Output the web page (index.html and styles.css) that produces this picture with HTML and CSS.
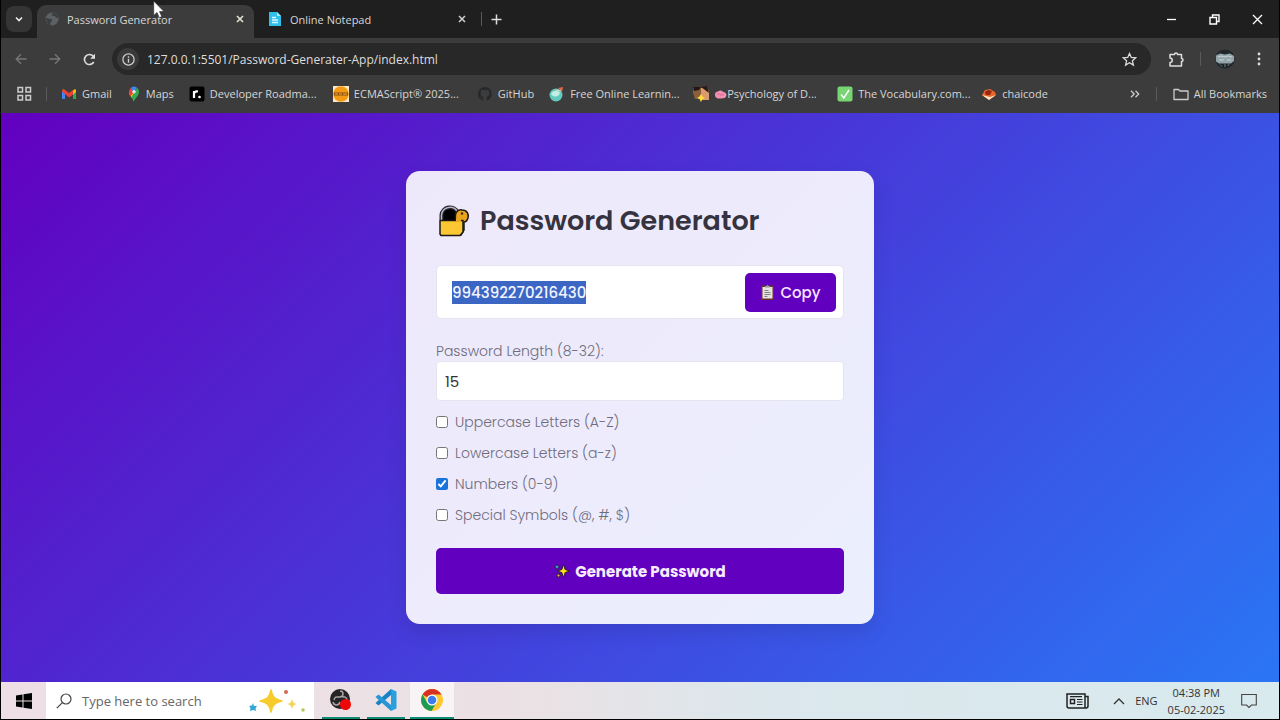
FILE: index.html
```
<!DOCTYPE html>
<html lang="en">
<head>
    <meta charset="UTF-8">
    <meta name="viewport" content="width=device-width, initial-scale=1.0">
    <title>Password Generator</title>
    <link rel="stylesheet" href="styles.css">
</head>
<body>
    <div class="screen">

        <!-- tab strip -->
        <div class="tabs">
            <button class="tab-list" aria-label="Search tabs">
                <svg width="10" height="10" viewBox="0 0 10 10"><path d="M2 3.5l3 3 3-3" fill="none" stroke="#eee" stroke-width="1.6"/></svg>
            </button>
            <div class="tab active">
                <svg width="14" height="14" viewBox="0 0 14 14"><circle cx="7" cy="7" r="6.5" fill="#5c6164"/><path d="M1 6c2 0 3 1 5 1s1 2 0 3-1 2 0 3.500C3 13 1 10 1 6zM7 1c-1 2 0 3 2 3s1 2 3 2l1.300-.5C12.500 3 10 1 7 1z" fill="#3a3f42"/></svg>
                <span>Password Generator</span>
                <button class="close" aria-label="Close tab"><svg width="8" height="8" viewBox="0 0 8 8"><path d="M1 1l6 6M7 1L1 7" stroke="#e4e0d0" stroke-width="1.7"/></svg></button>
            </div>
            <div class="tab">
                <svg width="14" height="14" viewBox="0 0 14 14"><path d="M1 0h8l4 4v10H1z" fill="#2fc0ea"/><path d="M9 0v4h4z" fill="#a8e8fa"/><path d="M4 5.500h4M4 8h6M4 10.500h6" stroke="#d6f5ff" stroke-width="1.300"/></svg>
                <span>Online Notepad</span>
                <button class="close" aria-label="Close tab"><svg width="8" height="8" viewBox="0 0 8 8"><path d="M1 1l6 6M7 1L1 7" stroke="#d0d0d0" stroke-width="1.500"/></svg></button>
            </div>
            <span class="line"></span>
            <button class="new-tab" aria-label="New tab"><svg width="11" height="11" viewBox="0 0 11 11"><path d="M5.500 0.500v10M0.500 5.500h10" stroke="#ddd" stroke-width="1.500"/></svg></button>
            <div class="window-btns">
                <button aria-label="Minimize"><svg width="11" height="11" viewBox="0 0 11 11"><path d="M1 5.500h9" stroke="#fff" stroke-width="1.300"/></svg></button>
                <button aria-label="Restore"><svg width="11" height="11" viewBox="0 0 11 11"><path d="M1 3.500h6.500V10H1zM3.500 3.500V1H10v6.500H7.500" fill="none" stroke="#fff" stroke-width="1.400"/></svg></button>
                <button aria-label="Close"><svg width="11" height="11" viewBox="0 0 11 11"><path d="M1 1l9 9M10 1l-9 9" stroke="#fff" stroke-width="1.300"/></svg></button>
            </div>
        </div>

        <!-- address bar -->
        <div class="toolbar">
            <button aria-label="Back"><svg width="12" height="12" viewBox="0 0 12 12"><path d="M11.500 6H1.500M6 1.200L1.200 6 6 10.800" fill="none" stroke="#777" stroke-width="1.300"/></svg></button>
            <button aria-label="Forward"><svg width="12" height="12" viewBox="0 0 12 12"><path d="M.5 6h10M6 1.200L10.800 6 6 10.800" fill="none" stroke="#777" stroke-width="1.300"/></svg></button>
            <button aria-label="Reload"><svg width="13" height="13" viewBox="0 0 13 13"><path d="M10.800 9A5 5 0 1 1 10.300 3.300L11.500 5" fill="none" stroke="#ddd" stroke-width="1.600"/><path d="M12 .8v5H7.200z" fill="#ddd"/></svg></button>
            <div class="address">
                <span class="info"><svg width="13" height="13" viewBox="0 0 13 13"><circle cx="6.500" cy="6.500" r="5.600" fill="none" stroke="#ccc" stroke-width="1.300"/><path d="M6.500 5.700v4M6.500 3.300v1.400" stroke="#ccc" stroke-width="1.400"/></svg></span>
                <input type="text" aria-label="Address" value="127.0.0.1:5501/Password-Generater-App/index.html">
                <button aria-label="Bookmark this tab"><svg width="15" height="15" viewBox="0 0 15 15"><path d="M7.500 1.500l1.800 4 4.400.4-3.300 2.900 1 4.300-3.900-2.300-3.900 2.300 1-4.300L1.300 5.900l4.400-.4z" fill="none" stroke="#ddd" stroke-width="1.300"/></svg></button>
            </div>
            <div class="tools">
                <button aria-label="Extensions"><svg width="17" height="17" viewBox="0 0 17 17"><path d="M2 3.500h4.500a1.500 1.500 0 0 1 3 0H13.500v4a1.500 1.500 0 0 1 0 3V15H2v-3.500a2.200 2.200 0 0 0 0-4.500z" fill="none" stroke="#ddd" stroke-width="1.500" stroke-linejoin="round"/></svg></button>
                <span class="line"></span>
                <button aria-label="Profile"><svg width="20" height="20" viewBox="0 0 20 20"><circle cx="10" cy="10" r="9.500" fill="#20262a"/><path d="M1 6.500l4-2 5 1 5-1 4 2.500v5l-3 2.500H4L1 12.500z" fill="#93a4ab"/><path d="M3 8l3-1 3 1 4-1 4 1M4 11h5M12 11h4" stroke="#c6d1d5" fill="none"/><path d="M5 15.500l2 2M10 15v3M14 15l-1 2" stroke="#6b7a80"/></svg></button>
                <button aria-label="Menu"><svg width="4" height="14" viewBox="0 0 4 14"><g fill="#ddd"><circle cx="2" cy="2" r="1.400"/><circle cx="2" cy="7" r="1.400"/><circle cx="2" cy="12" r="1.400"/></g></svg></button>
            </div>
        </div>

        <!-- bookmarks -->
        <div class="bookmarks">
            <button aria-label="Apps"><svg width="15" height="15" viewBox="0 0 15 15"><path d="M1 1.500h4.500V6H1zM9 1.500h4.500V6H9zM1 9.500h4.500V14H1zM9 9.500h4.500V14H9z" fill="none" stroke="#ccc" stroke-width="1.500"/></svg></button>
            <span class="line"></span>
            <a href="#"><svg width="16" height="16" viewBox="0 0 16 16"><path d="M1 4v9h3V7z" fill="#4285f4"/><path d="M15 4v9h-3V7z" fill="#34a853"/><path d="M1 4l3 3V5z" fill="#c5221f"/><path d="M12 4.500l2-1.500 1 1v2l-3 2.500z" fill="#fbbc04"/><path d="M1 5.500V4l1.500-1.200L8 7l4-3v4.500L8 11.500z" fill="#ea4335"/></svg><span>Gmail</span></a>
            <a href="#"><svg width="14" height="16" viewBox="0 0 14 16"><path d="M7 15.500C6 12 2 10 2 6h5z" fill="#fbbc04"/><path d="M2 6a5 5 0 0 1 1.500-3.800L7 6l-3.500 4C2.500 9 2 7.500 2 6z" fill="#ea4335"/><path d="M3.500 2.200A5 5 0 0 1 10 1.800L7 6z" fill="#4285f4"/><path d="M10 1.800A5 5 0 0 1 12 6c0 4-4 6-5 9.500-.3-1.500-1.500-3-2.500-4.500z" fill="#34a853"/><circle cx="7" cy="5.800" r="1.800" fill="#d9e6ff"/></svg><span>Maps</span></a>
            <a href="#" class="long"><svg width="16" height="16" viewBox="0 0 16 16"><rect x=".5" y=".5" width="15" height="15" rx="2" fill="#000"/><path d="M5 12V5M5 7.500C5.500 5.800 7 5.200 9 5.500" fill="none" stroke="#fff" stroke-width="2.200"/><circle cx="10.500" cy="11" r="1.300" fill="#fff"/></svg><span>Developer Roadma...</span></a>
            <a href="#" class="long"><svg width="16" height="16" viewBox="0 0 16 16"><path d="M0 0h16v16H0z" fill="#fbe8c4"/><circle cx="8" cy="8" r="7.800" fill="#f59a13"/><path d="M1 6.500h14v3H1z" fill="#8a4b08"/><path d="M2 8h3M6 8h3M10 8h4" stroke="#f9bb55"/></svg><span>ECMAScript® 2025...</span></a>
            <a href="#"><svg width="16" height="16" viewBox="0 0 16 16"><path d="M8 1a7 7 0 0 0-2.200 13.600c.4 0 .5-.2.5-.4v-1.400c-2 .4-2.400-.9-2.400-.9-.3-.8-.8-1-.8-1-.6-.4 0-.4 0-.4.7 0 1.100.7 1.100.7.7 1.100 1.700.8 2.100.6 0-.4.2-.8.4-1-1.600-.2-3.200-.8-3.200-3.500 0-.8.3-1.400.7-1.900-.1-.2-.3-.9.100-1.900 0 0 .6-.2 1.900.7a6.600 6.600 0 0 1 3.500 0c1.300-.9 1.900-.7 1.900-.7.4 1 .2 1.700.1 1.900.5.500.7 1.100.7 1.900 0 2.700-1.600 3.300-3.200 3.500.3.200.5.700.5 1.300v2c0 .2.100.4.500.4A7 7 0 0 0 8 1z" fill="#25282b"/></svg><span>GitHub</span></a>
            <a href="#" class="long"><svg width="16" height="16" viewBox="0 0 16 16"><circle cx="7" cy="9" r="6.500" fill="#62c9bd"/><path d="M2 8c2-4 7-4 9-1-1 4-6 5-9 1z" fill="#c4eee3"/><path d="M9 2l5-1-1 5z" fill="#df6b4c"/><path d="M7 4l5 1" stroke="#e9d9bd"/></svg><span>Free Online Learnin...</span></a>
            <a href="#" class="long"><svg width="16" height="16" viewBox="0 0 16 16"><path d="M0 1h8l2 5-3 7H2L0 7z" fill="#8d5e3c"/><path d="M0 1h8L6 4 1 5z" fill="#211813"/><path d="M8 2l6-1 2 5v8H9L8 8z" fill="#d89b6d"/><path d="M8 1l6-1 2 7-4-3z" fill="#2b1a14"/><path d="M8 8l1.500 2.500L12 12l-2.500 1L8 16l-1.500-3L4 12l2.500-1.500z" fill="#ffdf3c"/></svg><span><svg class="brain" width="13" height="10" viewBox="0 0 13 10"><path d="M1 5a3 3 0 0 1 3-3.500A4 4 0 0 1 9.500 2a3 3 0 0 1 2.500 4.500C11 9 8.500 8 7.500 8.500 4 9 1 8 1 5z" fill="#f291b2"/><path d="M3 4h3l1 2M8 3v2h2" fill="none" stroke="#cf5f8a" stroke-width=".7"/></svg>Psychology of D...</span></a>
            <a href="#" class="long"><svg width="16" height="16" viewBox="0 0 16 16"><rect x=".5" y=".5" width="15" height="15" rx="2" fill="#77d672"/><path d="M4 8.500L6.800 12 12 4" fill="none" stroke="#fff" stroke-width="1.500"/></svg><span>The Vocabulary.com...</span></a>
            <a href="#"><svg width="16" height="16" viewBox="0 0 16 16"><path d="M1 9l3-5 5-1 5 3 1 3-7 5z" fill="#e8662c"/><path d="M1 9l7 5 7-5-6 2z" fill="#ffe3c4"/><path d="M4 6l3-2 4 1-2 4-4 0z" fill="#96270d"/></svg><span>chaicode</span></a>
            <div class="all">
                <button aria-label="More bookmarks"><svg width="10" height="8" viewBox="0 0 10 8"><path d="M1 .8L4.200 4 1 7.200M5.500.8L8.700 4 5.500 7.200" fill="none" stroke="#ccc" stroke-width="1.300"/></svg></button>
                <span class="line"></span>
                <a href="#"><svg width="16" height="14" viewBox="0 0 16 14"><path d="M1 11.500v-9h4.500L7 4h8v8.500H1z" fill="none" stroke="#ccc" stroke-width="1.300" stroke-linejoin="round"/></svg><span>All Bookmarks</span></a>
            </div>
        </div>

        <!-- page -->
        <main class="page">
            <div class="container">
                <h1>
                    <svg width="34" height="34" viewBox="0 0 34 34"><path d="M6 16v-5a8 8 0 0 1 16-1v6z" fill="#000"/><path d="M5.500 16v-5a8.500 8.500 0 0 1 16-3" fill="none" stroke="#23232b" stroke-width="4"/><path d="M5.500 16v-5a8.500 8.500 0 0 1 16-3" fill="none" stroke="#b9b9c4" stroke-width="1.500"/><path d="M20 16c-2-6 1-11 6-10 5 0 7 4 6 8-1 3-3 4-4 4v8l-3 5h-6z" fill="#eaa51f" stroke="#1d1716" stroke-width="1.500"/><circle cx="26" cy="9.500" r="1.300" fill="#463012"/><path d="M4 16.500h23V28l-3 3.500H5L4 30z" fill="#fbc834" stroke="#1d1716" stroke-width="1.500" stroke-linejoin="round"/><path d="M20 14h5v4h-5z" fill="#eaa51f"/></svg>
                    Password Generator
                </h1>
                <div class="display">
                    <span id="password"><mark>994392270216430</mark></span>
                    <button id="copy">
                        <svg width="15" height="16" viewBox="0 0 15 16"><path d="M1 1.500h13V16H1z" fill="#6b3029"/><path d="M2.500 3h10v11.500h-10z" fill="#e6e4e2"/><path d="M5 3.500V2h1.500a1 1 0 0 1 2 0H10v1.500z" fill="#8e9a9c"/><path d="M4.500 6.500h4M4.500 8.500h6M4.500 10.500h6M4.500 12.500h3" stroke="#777" stroke-width=".9"/></svg>
                        Copy
                    </button>
                </div>
                <label for="length">Password Length (8-32):</label>
                <input type="text" inputmode="numeric" id="length" value="15">
                <div class="options">
                    <label><input type="checkbox"> Uppercase Letters (A-Z)</label>
                    <label><input type="checkbox"> Lowercase Letters (a-z)</label>
                    <label><input type="checkbox" checked> Numbers (0-9)</label>
                    <label><input type="checkbox"> Special Symbols (@, #, $)</label>
                </div>
                <button id="generate">
                    <svg width="16" height="16" viewBox="0 0 16 16"><path d="M9.500 1.500l1.600 5L15.500 8l-4.400 1.600-1.600 5-1.600-5L3.500 8l4.400-1.500z" fill="#ffe11c" stroke="#16161c" stroke-width=".8"/><path d="M3 1l.8 2L6 4l-2.200.8L3 7l-.8-2.200L0 4l2.200-1z" fill="#4da0d8" stroke="#16161c" stroke-width=".5"/><path d="M4.500 10l.7 1.800 1.800.7-1.800.7-.7 1.800-.7-1.800-1.800-.7 1.800-.7z" fill="#e79a6b" stroke="#16161c" stroke-width=".5"/></svg>
                    Generate Password
                </button>
            </div>
        </main>

        <!-- taskbar -->
        <div class="taskbar">
            <button class="start" aria-label="Start"><svg width="16" height="16" viewBox="0 0 16 16"><path d="M0 2.400L6.500 1.500v6H0zM7.500 1.300L16 0v7.500H7.500zM0 8.500h6.500v6L0 13.600zM7.500 8.500H16V16l-8.500-1.300z"/></svg></button>
            <div class="search">
                <svg width="16" height="16" viewBox="0 0 16 16"><circle cx="10" cy="6" r="5" fill="none" stroke="#444" stroke-width="1.200"/><path d="M6.400 9.600L.8 15.200" stroke="#444" stroke-width="1.200"/></svg>
                <input type="text" aria-label="Search" placeholder="Type here to search">
                <svg width="58" height="26" viewBox="0 0 58 26"><path d="M23 2c1.500 7 3 9 11 11-8 2-9.500 4-11 11-1.500-7-3-9-11-11 8-2 9.500-4 11-11z" fill="#f7cb2d" stroke="#f7cb2d" stroke-width="1.500" stroke-linejoin="round"/><path d="M44 10.500c.8 4 1.500 4.500 5 5.500-3.500 1-4.200 1.500-5 5.500-.8-4-1.500-4.500-5-5.500 3.500-1 4.200-1.500 5-5.500z" fill="#f5d25a"/><path d="M5 15l1 3 3 0-1.500 2.500L8 23l-3-1-3 1 .5-3L1 18l3-.5z" fill="#35a7d5"/><circle cx="38" cy="4" r="2" fill="#d36950"/><circle cx="55" cy="22" r="1.800" fill="#b8c95c"/></svg>
            </div>
            <div class="apps">
                <button aria-label="OBS Studio"><svg width="24" height="24" viewBox="0 0 24 24"><circle cx="11" cy="11" r="10" fill="#262427"/><path d="M11 3c4 0 4 5 0 6-3 0-5-1-6 3M13 9c4-1 6 2 5 6M4 14c1 4 6 4 7 0" fill="none" stroke="#aaa5a5" stroke-width="1.500"/><circle cx="16.500" cy="16.500" r="5.500" fill="#f00606"/></svg></button>
                <button aria-label="Visual Studio Code"><svg width="24" height="24" viewBox="0 0 24 24"><path d="M17 1l5.500 2.500v17L17 23z" fill="#2a9fdd"/><path d="M17 1v6L4.500 17.500 1.500 15z" fill="#1583c7"/><path d="M17 23v-6L4.500 6.500 1.500 9z" fill="#2795d8"/></svg></button>
                <button class="current" aria-label="Google Chrome"><svg width="24" height="24" viewBox="0 0 24 24"><circle cx="12" cy="12" r="11" fill="#fcc934"/><path d="M12 12L2.500 6.500A11 11 0 0 1 21.500 6.500H12z" fill="#d93025"/><path d="M2.500 6.500A11 11 0 0 0 11.500 23l5-8.500L12 12l-4.800 2.500z" fill="#1e9b50"/><circle cx="12" cy="12" r="5.500" fill="#fff"/><circle cx="12" cy="12" r="4.300" fill="#3b7ded"/></svg></button>
            </div>
            <div class="tray">
                <button class="news" aria-label="News"><svg width="23" height="16" viewBox="0 0 23 16"><path d="M1 1h18v14H3a2 2 0 0 1-2-2zM19 3.500h3V13a2 2 0 0 1-2 2H3" fill="none" stroke="#222" stroke-width="1.500"/><path d="M4.500 6.500h4v4h-4z" fill="none" stroke="#222" stroke-width="1.400"/><path d="M4 3.700h12M11 6.500h5.500M11 9h5.500M11 11.500h5.500" stroke="#222" stroke-width="1.200"/></svg></button>
                <button aria-label="Show hidden icons"><svg width="12" height="8" viewBox="0 0 12 8"><path d="M1 7l5-5 5 5" fill="none" stroke="#333" stroke-width="1.300"/></svg></button>
                <span>ENG</span>
                <div class="clock">
                    <p>04:38 PM</p>
                    <p>05-02-2025</p>
                </div>
                <button class="notes" aria-label="Notifications"><svg width="16" height="16" viewBox="0 0 16 16"><path d="M.7 1.500h14.600v10.500H10.500L8 14.500 5.500 12H.7z" fill="none" stroke="#444" stroke-width="1.100"/></svg></button>
            </div>
        </div>

        <svg class="cursor" width="12" height="19" viewBox="0 0 12 19"><path d="M.7 1v14.500l3.300-3 2.300 5.200 2.500-1.100-2.300-5H11z" fill="#fff" stroke="#222" stroke-width=".6"/></svg>
    </div>
</body>
</html>
```
FILE: styles.css
```
*{
    box-sizing: border-box;
    margin: 0;
    padding: 0;
}
body{
    background-color: black;
    font-family: "Segoe UI", "Open Sans", "Noto Sans", sans-serif;
    font-size: 11px;
}
button{
    border: none;
    background: none;
    font-family: inherit;
    display: flex;
    align-items: center;
    justify-content: center;
}
input{
    font-family: inherit;
}
a{
    color: inherit;
    text-decoration: none;
}
svg{
    flex-shrink: 0;
}
.screen{
    position: relative;
    display: flex;
    flex-direction: column;
    min-height: 100vh;
    padding: 0 1px 1px;
    color: #d6d6d6;
}
.line{
    width: 1px;
    height: 14px;
    background: #5a5a5a;
}

/* tabs */
.tabs{
    display: flex;
    align-items: center;
    height: 38px;
    padding-left: 5px;
    background: #1f1f1f;
}
.tab-list{
    width: 26px;
    height: 26px;
    border-radius: 8px;
    background: #353535;
}
.tab{
    display: flex;
    align-items: center;
    gap: 8px;
    width: 227px;
    height: 32px;
    padding: 0 13px 0 14px;
}
.tab.active{
    width: 217px;
    height: 33px;
    margin: 5px 0 0 5px;
    padding: 0 8px 5px 8px;
    border-radius: 9px 9px 0 0;
    background: #3c3c3c;
}
.close{
    width: 12px;
    height: 12px;
    margin-left: auto;
}
.new-tab{
    width: 28px;
    height: 28px;
}
.window-btns{
    display: flex;
    margin-left: auto;
}
.window-btns button{
    width: 43px;
    height: 38px;
}

/* address bar */
.toolbar{
    display: flex;
    align-items: center;
    height: 42px;
    padding: 0 3px;
    background: #3c3c3c;
}
.toolbar button{
    width: 34px;
    height: 32px;
}
.address{
    flex: 1;
    display: flex;
    align-items: center;
    height: 32px;
    margin-left: 6px;
    padding: 0 5px;
    border-radius: 16px;
    background: #282828;
}
.info{
    display: flex;
    align-items: center;
    justify-content: center;
    width: 22px;
    height: 22px;
    border-radius: 50%;
    background: #3a3a3a;
}
.address input{
    flex: 1;
    min-width: 0;
    margin-left: 8px;
    border: none;
    outline: none;
    background: none;
    color: #dedede;
    font-size: 12px;
}
.tools{
    display: flex;
    align-items: center;
    padding-left: 8px;
}
.tools .line{
    margin: 0 7px;
}

/* bookmarks */
.bookmarks{
    display: flex;
    align-items: center;
    gap: 15px;
    height: 33px;
    padding: 0 12px 6px 16px;
    background: #3c3c3c;
    white-space: nowrap;
}
.bookmarks > .line{
    margin: 0 -1px;
}
.bookmarks a{
    display: flex;
    align-items: center;
    gap: 5px;
}
.bookmarks .long span{
    width: 108px;
}
.brain{
    vertical-align: middle;
}
.all{
    display: flex;
    align-items: center;
    gap: 16px;
    margin-left: auto;
}

/* page */
.page{
    flex: 1;
    display: flex;
    align-items: center;
    justify-content: center;
    background: linear-gradient(135deg, #6200bf, #2a76f5);
    font-family: "Poppins", "Inter", sans-serif;
}
.container{
    width: 468px;
    padding: 30px;
    border-radius: 14px;
    background: rgba(255, 255, 255, 0.9);
    box-shadow: 0 8px 20px rgba(0, 0, 0, 0.1);
    color: #6f6b7c;
    font-size: 14px;
}
.container h1{
    display: flex;
    align-items: center;
    gap: 10px;
    height: 40px;
    margin-bottom: 24px;
    color: #35333f;
    font-size: 27px;
    font-weight: 600;
}
.display{
    display: flex;
    align-items: center;
    justify-content: space-between;
    height: 54px;
    margin-bottom: 22px;
    padding: 0 7px 0 15px;
    border: 1px solid #e6e4ee;
    border-radius: 5px;
    background: white;
}
mark{
    display: inline-block;
    background: #3c66c4;
    color: #f1f4ff;
    font-size: 15px;
    font-weight: 500;
    line-height: 23px;
}
#copy{
    gap: 5px;
    width: 91px;
    height: 39px;
    border-radius: 5px;
    background: #6200bf;
    color: #f6e4ff;
    font-size: 15px;
    font-weight: 500;
}
.container label{
    display: flex;
    align-items: center;
    height: 20px;
    font-weight: 300;
}
#length{
    width: 100%;
    height: 40px;
    margin-bottom: 11px;
    padding: 0 8px;
    border: 1px solid #e6e4ee;
    border-radius: 4px;
    background: white;
    color: #333;
    font-size: 15px;
}
.options{
    display: flex;
    flex-direction: column;
    gap: 11px;
    margin-bottom: 23px;
}
.options label{
    gap: 7px;
}
.options input{
    width: 12px;
    height: 12px;
    accent-color: #1a73d8;
}
#generate{
    gap: 5px;
    width: 100%;
    height: 46px;
    border-radius: 5px;
    background: #6200bf;
    color: #f8ecff;
    font-size: 15px;
    font-weight: 700;
}

/* taskbar */
.taskbar{
    display: flex;
    align-items: center;
    height: 37px;
    background: linear-gradient(90deg, #eddfe5, #ebe1e4 40%, #dbe7ec 60%, #d8eaee);
    color: #333;
}
.start{
    width: 45px;
    height: 37px;
}
.search{
    display: flex;
    align-items: center;
    gap: 10px;
    width: 268px;
    height: 37px;
    padding: 0 8px 0 10px;
    background: white;
}
.search input{
    flex: 1;
    min-width: 0;
    border: none;
    outline: none;
    background: none;
    font-size: 13px;
}
.search input::placeholder{
    color: #666;
}
.apps{
    display: flex;
    gap: 7px;
    padding-left: 8px;
}
.apps button{
    width: 38px;
    height: 37px;
    border-bottom: 2px solid #0d8a72;
}
.apps .current{
    width: 44px;
    margin-left: -2px;
    background: #f8f4f5;
}
.tray{
    display: flex;
    align-items: center;
    gap: 10px;
    margin-left: auto;
    padding-right: 22px;
}
.news{
    margin-right: 14px;
}
.clock{
    text-align: center;
    line-height: 17px;
}
.notes{
    margin-left: 6px;
}
.cursor{
    position: absolute;
    left: 153px;
    top: 0;
}
```
